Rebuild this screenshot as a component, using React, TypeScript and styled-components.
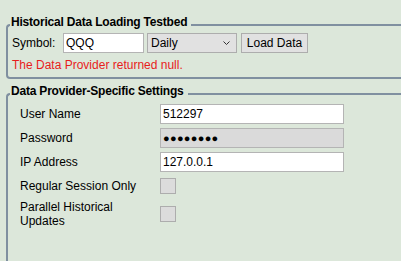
import React from 'react';
import styled, { createGlobalStyle } from 'styled-components';

const GlobalStyle = createGlobalStyle`
  html, body {
    margin: 0;
    padding: 0;
    background: #dce7da;
    overflow: hidden;
  }
  body {
    font-family: 'Liberation Sans', Arial, sans-serif;
    font-size: 12px;
    color: #000;
  }
`;

const Page = styled.div`
  width: 401px;
  height: 261px;
  padding: 15px 0 0 6px;
  box-sizing: border-box;
  overflow: hidden;
`;

const Group = styled.section<{ gap?: number }>`
  width: 440px;
  margin-top: ${(p) => p.gap || 0}px;
`;

// title row: rounded corner, bold caption, then the rest of the top border
const GroupHeader = styled.div`
  display: flex;
  height: 16px;
`;

const Corner = styled.div`
  align-self: flex-end;
  width: 4px;
  height: 7px;
  box-sizing: border-box;
  border-top: 2px solid #8090a0;
  border-left: 2px solid #8090a0;
  border-top-left-radius: 4px;
`;

const Title = styled.div`
  align-self: flex-start;
  padding: 0 4px 0 1px;
  font-size: 12px;
  font-weight: 700;
  letter-spacing: -0.2px;
  line-height: 14px;
  white-space: nowrap;
`;

const TopLine = styled.div`
  align-self: flex-end;
  flex: 1;
  height: 7px;
  box-sizing: border-box;
  border-top: 2px solid #8090a0;
`;

const GroupBody = styled.div<{ pad: string }>`
  padding: ${(p) => p.pad};
  border: 2px solid #8090a0;
  border-top: none;
  border-radius: 0 0 4px 4px;
`;

const Row = styled.div`
  display: flex;
  align-items: center;
`;

const SymbolLabel = styled.span`
  width: 51px;
  flex: none;
`;

const TextBox = styled.input<{ w: number }>`
  width: ${(p) => p.w}px;
  height: 20px;
  box-sizing: border-box;
  margin: 0;
  padding: 0 2px;
  border: 1px solid #b4b4b4;
  background: ${(p) => (p.readOnly ? '#dadada' : '#fff')};
  font-family: 'Liberation Sans', Arial, sans-serif;
  font-size: 12px;
  color: #000;
  outline: none;
`;

const Dots = styled(TextBox)`
  font-size: 11px;
  letter-spacing: 0.3px;
`;

const Combo = styled.div`
  width: 90px;
  height: 20px;
  margin-left: 3px;
  box-sizing: border-box;
  border: 1px solid #adadad;
  background: #e1e1e1;
  display: flex;
  align-items: center;
  justify-content: space-between;
  padding: 0 6px 0 3px;
`;

const Button = styled.button`
  width: 67px;
  height: 20px;
  margin-left: 4px;
  box-sizing: border-box;
  border: 1px solid #adadad;
  background: #e1e1e1;
  padding: 0;
  font-family: 'Liberation Sans', Arial, sans-serif;
  font-size: 12px;
  color: #000;
`;

const ErrorText = styled.div`
  margin-top: 4px;
  line-height: 16px;
  color: #e81c1c;
`;

const Form = styled.div`
  display: flex;
  flex-direction: column;
  gap: 4px;
`;

const FieldRow = styled.div<{ h: number }>`
  display: flex;
  align-items: center;
  height: ${(p) => p.h}px;
`;

const FieldLabel = styled.div`
  width: 140px;
  flex: none;
  line-height: 14px;
`;

const Check = styled.div`
  width: 16px;
  height: 16px;
  box-sizing: border-box;
  border: 1px solid #adadad;
  background: #dcdcdc;
`;

const Chevron = () => (
  <svg width='7' height='4' viewBox='0 0 7 4'>
    <path d='M0.5 0.5 L3.5 3.5 L6.5 0.5' fill='none' stroke='#333' strokeWidth='1' />
  </svg>
);

const GroupBox = ({ title, gap, pad, children }: { title: string; gap?: number; pad: string; children: React.ReactNode }) => (
  <Group gap={gap}>
    <GroupHeader>
      <Corner />
      <Title>{title}</Title>
      <TopLine />
    </GroupHeader>
    <GroupBody pad={pad}>{children}</GroupBody>
  </Group>
);

const App = () => {
  return (
    <>
      <GlobalStyle />
      <Page>
        <GroupBox title='Historical Data Loading Testbed' pad='2px 0 4px 4px'>
          <Row>
            <SymbolLabel>Symbol:</SymbolLabel>
            <TextBox w={81} defaultValue='QQQ' />
            <Combo>
              <span>Daily</span>
              <Chevron />
            </Combo>
            <Button type='button'>Load Data</Button>
          </Row>
          <ErrorText>The Data Provider returned null.</ErrorText>
        </GroupBox>

        <GroupBox title='Data Provider-Specific Settings' gap={5} pad='4px 0 60px 12px'>
          <Form>
            <FieldRow h={20}>
              <FieldLabel>User Name</FieldLabel>
              <TextBox w={184} defaultValue='512297' />
            </FieldRow>
            <FieldRow h={20}>
              <FieldLabel>Password</FieldLabel>
              <Dots w={184} defaultValue='●●●●●●●●' readOnly />
            </FieldRow>
            <FieldRow h={20}>
              <FieldLabel>IP Address</FieldLabel>
              <TextBox w={184} defaultValue='127.0.0.1' />
            </FieldRow>
            <FieldRow h={20}>
              <FieldLabel>Regular Session Only</FieldLabel>
              <Check />
            </FieldRow>
            <FieldRow h={28}>
              <FieldLabel>
                Parallel Historical
                <br />
                Updates
              </FieldLabel>
              <Check />
            </FieldRow>
          </Form>
        </GroupBox>
      </Page>
    </>
  );
};

export default App;
